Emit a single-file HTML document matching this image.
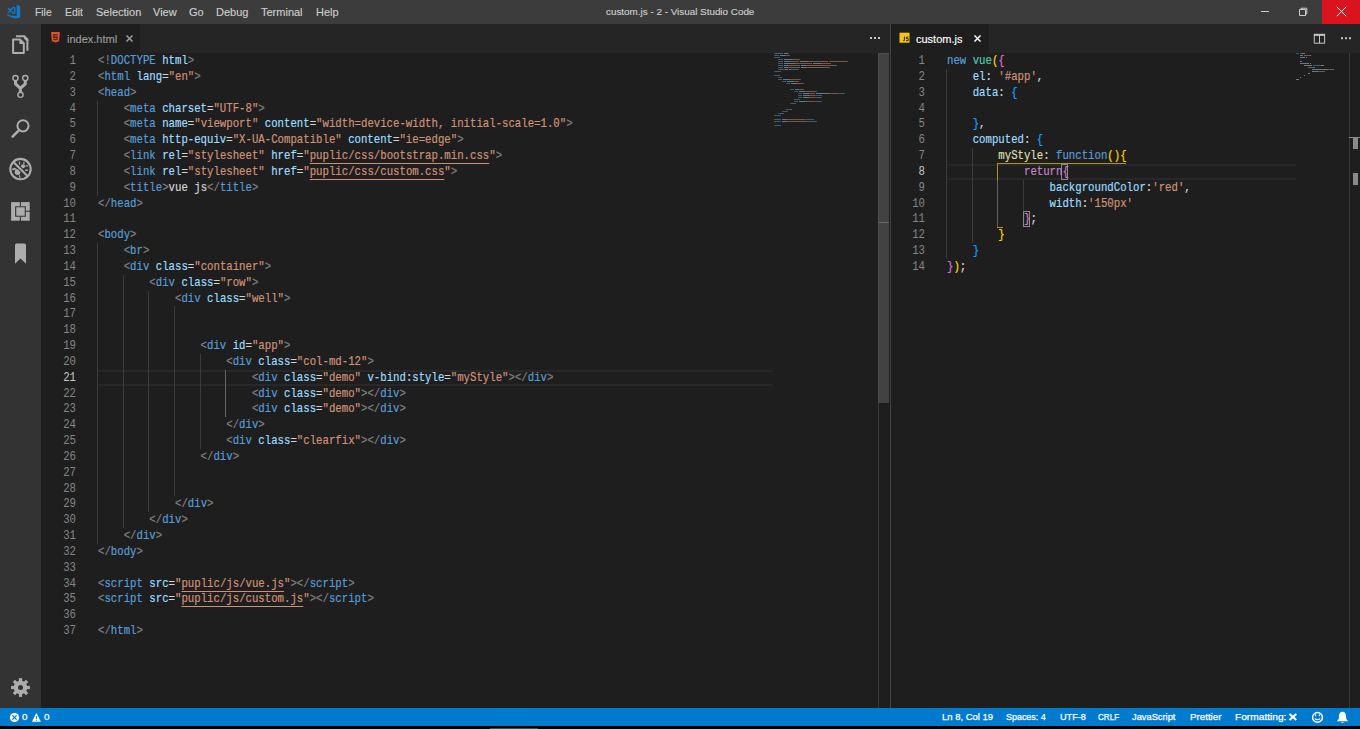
<!DOCTYPE html>
<html><head><meta charset="utf-8"><title>custom.js - 2 - Visual Studio Code</title>
<style>
*{margin:0;padding:0;box-sizing:border-box}
html,body{width:1360px;height:729px;overflow:hidden;background:#000}
body{position:relative;font-family:"Liberation Sans",sans-serif}
.abs{position:absolute}
#title{left:0;top:0;width:1360px;height:24px;background:#3c3c3c}
.menu{position:absolute;top:5px;font-size:11px;color:#cccccc;line-height:14px;white-space:nowrap;transform-origin:0 0;-webkit-text-stroke:0.15px currentColor}
#ttl{position:absolute;top:4.5px;left:605.5px;font-size:9.5px;transform-origin:0 0;-webkit-text-stroke:0.15px currentColor;color:#cccccc;line-height:14px;white-space:nowrap}
#act{left:0;top:24px;width:41px;height:684px;background:#333333}
#edl{left:41px;top:24px;width:849px;height:684px;background:#1e1e1e}
#edr{left:891px;top:24px;width:469px;height:684px;background:#1e1e1e}
#div{left:890px;top:24px;width:1px;height:684px;background:#444444}
.tabs{position:absolute;left:0;top:0;height:29px;background:#252526}
.tab{position:absolute;top:0;height:29px;background:#1e1e1e}
.tabtxt{position:absolute;top:8px;font-size:11px;line-height:14px;white-space:nowrap;-webkit-text-stroke:0.15px currentColor}
#status{left:0;top:708px;width:1360px;height:18px;background:#007acc}
.st{position:absolute;top:3px;font-size:9.9px;line-height:12px;color:#ffffff;white-space:nowrap;transform-origin:0 0;-webkit-text-stroke:0.25px currentColor}
.code{position:absolute;font-family:"Liberation Mono",monospace;font-size:11.9px;line-height:15.8333px;white-space:pre;transform:scaleX(0.89870);transform-origin:0 0;-webkit-text-stroke:0.2px currentColor}
.nums{position:absolute;font-family:"Liberation Mono",monospace;font-size:11.9px;line-height:15.8333px;text-align:right;color:#858585;white-space:pre;transform:scaleX(0.89870);transform-origin:100% 0}
.nums .cur{color:#c6c6c6}
.ln{position:absolute;left:0;right:0;height:16px;line-height:16px}
.g{position:absolute;width:1px;background:#3c3c3c}
.ga{background:#666666}
.curline{position:absolute;height:16px;border-top:2px solid #282828;border-bottom:2px solid #282828}
</style></head>
<body>
<div id="title" class="abs">
  <svg class="abs" style="left:0;top:0" width="26" height="24" viewBox="0 0 26 24">
    <path d="M16.7 4.8 L20.2 6.0 V17.3 L17.6 18.3 L16.7 17.5 Z" fill="#0e7ad3"/>
    <path d="M7.0 14.1 C9 15.2 12 16.3 16.8 16.3 L17.6 18.3 C13 18.3 9.5 16.8 7.0 14.9 Z" fill="#0e7ad3"/>
    <path d="M8.2 8.2 L12.7 12.7 C13.5 13.5 14.8 13.5 14.8 12.1 V8.5 C14.8 7.1 13.5 7.2 12.7 8.0 L8.2 12.5" fill="none" stroke="#0e7ad3" stroke-width="1.4"/>
  </svg>
  <div class="menu" style="left:35px;transform:scaleX(0.94)">File</div>
  <div class="menu" style="left:64.5px;transform:scaleX(0.94)">Edit</div>
  <div class="menu" style="left:96px">Selection</div>
  <div class="menu" style="left:153px">View</div>
  <div class="menu" style="left:189px">Go</div>
  <div class="menu" style="left:216px">Debug</div>
  <div class="menu" style="left:261px">Terminal</div>
  <div class="menu" style="left:316px">Help</div>
  <div id="ttl" style="transform:scaleX(1.038)">custom.js - 2 - Visual Studio Code</div>
  <div class="abs" style="left:1261px;top:11px;width:8px;height:1px;background:#cccccc"></div>
  <svg class="abs" style="left:1296px;top:5px" width="14" height="14" viewBox="1296 5 14 14">
    <path d="M1299.5 9.5 h6 v6 h-6 z M1301 9.3 V8.2 H1306.8 V14 H1305.7" fill="none" stroke="#cccccc" stroke-width="1"/>
  </svg>
  <div class="abs" style="left:1322px;top:0;width:38px;height:24px;background:#d9141f"></div>
  <svg class="abs" style="left:1330px;top:2px" width="20" height="20" viewBox="1330 2 20 20">
    <path d="M1336.8 6.8 L1346.2 16.2 M1346.2 6.8 L1336.8 16.2" stroke="#ffffff" stroke-width="1"/>
  </svg>
</div>

<div id="act" class="abs">
<svg class="abs" style="left:0;top:0" width="41" height="684" viewBox="0 24 41 684">
 <defs><clipPath id="dbc"><circle cx="20.5" cy="169.1" r="9.2"/></clipPath></defs>
 <g fill="none" stroke="#adadad">
  <path d="M13.1 39.6 H20.2 L23.8 43.2 V53.1 H13.1 Z" stroke-width="2" stroke-linejoin="round"/>
  <path d="M16 36.3 H24.4 L27.4 39.3 V50.8" stroke-width="2" stroke-linejoin="miter"/>
  <circle cx="15.5" cy="78.1" r="2.6" stroke-width="1.4"/>
  <circle cx="25.3" cy="78.1" r="2.6" stroke-width="1.4"/>
  <circle cx="20.5" cy="94.8" r="2.6" stroke-width="1.4"/>
  <path d="M15.5 80.6 V83.8 L20.4 88.4 L25.3 83.8 V80.6 M20.4 88 V92.2" stroke-width="3" stroke-linejoin="round"/>
  <circle cx="23" cy="125.8" r="5.6" stroke-width="2"/>
  <path d="M12.6 136.6 L18.6 130.6" stroke-width="2.6" stroke-linecap="round"/>
 </g>
 <g fill="#adadad">
  <path d="M19.4 39 L24.4 44 H19.4 Z"/><path d="M23.8 35.3 L28.4 39.9 V41 L26.4 41 L23.8 38.4 Z"/>
  <circle cx="17.6" cy="172" r="2.9"/>
  <path d="M11.8 168.8 L14.8 167.8 L16.8 168.8 L15.2 169.8 L12.6 170.3 Z"/>
  <path d="M19.6 174.5 L20.6 177.5 L19.6 178.5 L18.8 175.5 Z"/>
  <circle cx="23" cy="166.3" r="2.1"/>
  <path d="M18.9 161.5 h1.2 v3.2 h-1.2 Z M23.3 161.8 h1.2 v2.5 h-1.2 Z M25.6 165.3 h2.6 v1.3 h-2.6 Z M25.2 169.6 h2.6 v1.3 h-2.6 Z"/>
 </g>
 <g clip-path="url(#dbc)">
  <path d="M12.9 161.5 L28.1 176.7" stroke="#333333" stroke-width="4.4"/>
  <path d="M12.9 161.5 L28.1 176.7" stroke="#adadad" stroke-width="2.1"/>
 </g>
 <circle cx="20.5" cy="169.1" r="10.2" stroke-width="2.1" stroke="#adadad" fill="none"/>
 <g fill="#adadad">
  <path d="M11.1 202.1 H29.7 V220.7 H11.1 Z"/>
  <path d="M15 245.2 Q15 243.6 16.6 243.6 H24.4 Q26 243.6 26 245.2 V263.7 L20.5 258.4 L15 263.7 Z"/>
  <path d="M18.9 678.1 h3.2 v18.8 h-3.2 Z" />
  <path d="M18.9 678.1 h3.2 v18.8 h-3.2 Z" transform="rotate(45 20.5 687.5)"/>
  <path d="M18.9 678.1 h3.2 v18.8 h-3.2 Z" transform="rotate(90 20.5 687.5)"/>
  <path d="M18.9 678.1 h3.2 v18.8 h-3.2 Z" transform="rotate(135 20.5 687.5)"/>
  <circle cx="20.5" cy="687.5" r="6.8"/>
 </g>
 <circle cx="20.5" cy="687.5" r="2.5" fill="#333333"/>
 <g stroke="#333333" stroke-width="1.1" fill="none">
  <path d="M20.4 202 V206.2 M20.4 216.8 V221 M25.8 211.3 H30"/>
  <path d="M15.7 206.7 H25.3 V216.3 H15.7 Z"/>
 </g>
</svg>
</div>

<div id="edl" class="abs">
  <div class="tabs" style="width:849px"></div>
  <div class="tab" style="left:0;width:99px"></div>
  <div class="tabtxt" style="left:26px;color:rgba(255,255,255,0.5)">index.html</div>
  <svg class="abs" style="left:0;top:0" width="849" height="29" viewBox="41 24 849 29">
    <path d="M51.1 31.9 H59.9 L59.1 41.2 L55.5 42.5 L51.9 41.2 Z" fill="#e44d26"/>
    <path d="M53.2 34.3 H57.8 V35.6 H54.6 V36.6 H57.8 V39.6 L55.5 40.4 L53.2 39.6 V38.4 H54.5 V38.8 L55.5 39.1 L56.5 38.8 V37.9 H53.2 Z" fill="#1e1e1e" opacity="0.75"/>
    <path d="M126.5 35.5 L132.5 41.5 M132.5 35.5 L126.5 41.5" stroke="#9d9d9d" stroke-width="1.5"/>
    <rect x="870" y="37" width="2" height="2" fill="#c5c5c5"/>
    <rect x="874" y="37" width="2" height="2" fill="#c5c5c5"/>
    <rect x="878" y="37" width="2" height="2" fill="#c5c5c5"/>
  </svg>
</div>
<div id="div" class="abs"></div>
<div id="edr" class="abs">
  <div class="tabs" style="width:469px"></div>
  <div class="tab" style="left:0;width:98px"></div>
  <div class="tabtxt" style="left:25px;color:#ffffff">custom.js</div>
  <svg class="abs" style="left:0;top:0" width="469" height="29" viewBox="891 24 469 29">
    <rect x="899.5" y="32.7" width="10" height="10" fill="#f5c21b"/>
    <path d="M904.4 36.5 V40.6 H903.2 M908.4 37 H906.4 V38.6 H908.2 V40.6 H906" stroke="#1e1e1e" stroke-width="0.9" fill="none"/>
    <path d="M974.5 35.5 L980.5 41.5 M980.5 35.5 L974.5 41.5" stroke="#ffffff" stroke-width="1.5"/>
    <path d="M1314.3 34.8 H1324.6 V43.2 H1314.3 Z M1319.5 35 V43" stroke="#c5c5c5" stroke-width="1" fill="none"/>
    <rect x="1313.8" y="33.8" width="11.3" height="2" fill="#c5c5c5"/>
    <rect x="1341" y="37.2" width="2" height="2" fill="#c5c5c5"/>
    <rect x="1345" y="37.2" width="2" height="2" fill="#c5c5c5"/>
    <rect x="1349" y="37.2" width="2" height="2" fill="#c5c5c5"/>
  </svg>
</div>

<div class="curline" style="left:98px;top:370px;width:675px"></div>
<div class="curline" style="left:947px;top:164px;width:349px"></div>
<div class="abs" style="left:1061px;top:164px;width:7px;height:16px;border:1px solid #888888;background:rgba(0,100,0,0.1)"></div>
<div class="abs" style="left:1023px;top:211px;width:7px;height:16px;border:1px solid #888888;background:rgba(0,100,0,0.1)"></div>

<svg class="abs" style="left:0;top:0" width="1360" height="729" viewBox="0 0 1360 729"><g opacity="0.5"><rect x="774" y="53" width="2" height="1" fill="#808080"/><rect x="776" y="53" width="7" height="1" fill="#569cd6"/><rect x="784" y="53" width="4" height="1" fill="#9cdcfe"/><rect x="788" y="53" width="1" height="1" fill="#808080"/><rect x="774" y="55" width="1" height="1" fill="#808080"/><rect x="775" y="55" width="4" height="1" fill="#569cd6"/><rect x="780" y="55" width="4" height="1" fill="#9cdcfe"/><rect x="784" y="55" width="1" height="1" fill="#d4d4d4"/><rect x="785" y="55" width="4" height="1" fill="#ce9178"/><rect x="789" y="55" width="1" height="1" fill="#808080"/><rect x="774" y="57" width="1" height="1" fill="#808080"/><rect x="775" y="57" width="4" height="1" fill="#569cd6"/><rect x="779" y="57" width="1" height="1" fill="#808080"/><rect x="778" y="59" width="1" height="1" fill="#808080"/><rect x="779" y="59" width="4" height="1" fill="#569cd6"/><rect x="784" y="59" width="7" height="1" fill="#9cdcfe"/><rect x="791" y="59" width="1" height="1" fill="#d4d4d4"/><rect x="792" y="59" width="7" height="1" fill="#ce9178"/><rect x="799" y="59" width="1" height="1" fill="#808080"/><rect x="778" y="61" width="1" height="1" fill="#808080"/><rect x="779" y="61" width="4" height="1" fill="#569cd6"/><rect x="784" y="61" width="4" height="1" fill="#9cdcfe"/><rect x="788" y="61" width="1" height="1" fill="#d4d4d4"/><rect x="789" y="61" width="10" height="1" fill="#ce9178"/><rect x="800" y="61" width="7" height="1" fill="#9cdcfe"/><rect x="807" y="61" width="1" height="1" fill="#d4d4d4"/><rect x="808" y="61" width="20" height="1" fill="#ce9178"/><rect x="829" y="61" width="18" height="1" fill="#ce9178"/><rect x="847" y="61" width="1" height="1" fill="#808080"/><rect x="778" y="63" width="1" height="1" fill="#808080"/><rect x="779" y="63" width="4" height="1" fill="#569cd6"/><rect x="784" y="63" width="10" height="1" fill="#9cdcfe"/><rect x="794" y="63" width="1" height="1" fill="#d4d4d4"/><rect x="795" y="63" width="17" height="1" fill="#ce9178"/><rect x="813" y="63" width="7" height="1" fill="#9cdcfe"/><rect x="820" y="63" width="1" height="1" fill="#d4d4d4"/><rect x="821" y="63" width="9" height="1" fill="#ce9178"/><rect x="830" y="63" width="1" height="1" fill="#808080"/><rect x="778" y="65" width="1" height="1" fill="#808080"/><rect x="779" y="65" width="4" height="1" fill="#569cd6"/><rect x="784" y="65" width="3" height="1" fill="#9cdcfe"/><rect x="787" y="65" width="1" height="1" fill="#d4d4d4"/><rect x="788" y="65" width="12" height="1" fill="#ce9178"/><rect x="801" y="65" width="4" height="1" fill="#9cdcfe"/><rect x="805" y="65" width="1" height="1" fill="#d4d4d4"/><rect x="806" y="65" width="1" height="1" fill="#ce9178"/><rect x="807" y="65" width="28" height="1" fill="#ce9178"/><rect x="835" y="65" width="1" height="1" fill="#ce9178"/><rect x="836" y="65" width="1" height="1" fill="#808080"/><rect x="778" y="67" width="1" height="1" fill="#808080"/><rect x="779" y="67" width="4" height="1" fill="#569cd6"/><rect x="784" y="67" width="3" height="1" fill="#9cdcfe"/><rect x="787" y="67" width="1" height="1" fill="#d4d4d4"/><rect x="788" y="67" width="12" height="1" fill="#ce9178"/><rect x="801" y="67" width="4" height="1" fill="#9cdcfe"/><rect x="805" y="67" width="1" height="1" fill="#d4d4d4"/><rect x="806" y="67" width="1" height="1" fill="#ce9178"/><rect x="807" y="67" width="21" height="1" fill="#ce9178"/><rect x="828" y="67" width="1" height="1" fill="#ce9178"/><rect x="829" y="67" width="1" height="1" fill="#808080"/><rect x="778" y="69" width="1" height="1" fill="#808080"/><rect x="779" y="69" width="5" height="1" fill="#569cd6"/><rect x="784" y="69" width="1" height="1" fill="#808080"/><rect x="785" y="69" width="3" height="1" fill="#d4d4d4"/><rect x="789" y="69" width="2" height="1" fill="#d4d4d4"/><rect x="791" y="69" width="2" height="1" fill="#808080"/><rect x="793" y="69" width="5" height="1" fill="#569cd6"/><rect x="798" y="69" width="1" height="1" fill="#808080"/><rect x="774" y="71" width="2" height="1" fill="#808080"/><rect x="776" y="71" width="4" height="1" fill="#569cd6"/><rect x="780" y="71" width="1" height="1" fill="#808080"/><rect x="774" y="75" width="1" height="1" fill="#808080"/><rect x="775" y="75" width="4" height="1" fill="#569cd6"/><rect x="779" y="75" width="1" height="1" fill="#808080"/><rect x="778" y="77" width="1" height="1" fill="#808080"/><rect x="779" y="77" width="2" height="1" fill="#569cd6"/><rect x="781" y="77" width="1" height="1" fill="#808080"/><rect x="778" y="79" width="1" height="1" fill="#808080"/><rect x="779" y="79" width="3" height="1" fill="#569cd6"/><rect x="783" y="79" width="5" height="1" fill="#9cdcfe"/><rect x="788" y="79" width="1" height="1" fill="#d4d4d4"/><rect x="789" y="79" width="11" height="1" fill="#ce9178"/><rect x="800" y="79" width="1" height="1" fill="#808080"/><rect x="782" y="81" width="1" height="1" fill="#808080"/><rect x="783" y="81" width="3" height="1" fill="#569cd6"/><rect x="787" y="81" width="5" height="1" fill="#9cdcfe"/><rect x="792" y="81" width="1" height="1" fill="#d4d4d4"/><rect x="793" y="81" width="5" height="1" fill="#ce9178"/><rect x="798" y="81" width="1" height="1" fill="#808080"/><rect x="786" y="83" width="1" height="1" fill="#808080"/><rect x="787" y="83" width="3" height="1" fill="#569cd6"/><rect x="791" y="83" width="5" height="1" fill="#9cdcfe"/><rect x="796" y="83" width="1" height="1" fill="#d4d4d4"/><rect x="797" y="83" width="6" height="1" fill="#ce9178"/><rect x="803" y="83" width="1" height="1" fill="#808080"/><rect x="790" y="89" width="1" height="1" fill="#808080"/><rect x="791" y="89" width="3" height="1" fill="#569cd6"/><rect x="795" y="89" width="2" height="1" fill="#9cdcfe"/><rect x="797" y="89" width="1" height="1" fill="#d4d4d4"/><rect x="798" y="89" width="5" height="1" fill="#ce9178"/><rect x="803" y="89" width="1" height="1" fill="#808080"/><rect x="794" y="91" width="1" height="1" fill="#808080"/><rect x="795" y="91" width="3" height="1" fill="#569cd6"/><rect x="799" y="91" width="5" height="1" fill="#9cdcfe"/><rect x="804" y="91" width="1" height="1" fill="#d4d4d4"/><rect x="805" y="91" width="11" height="1" fill="#ce9178"/><rect x="816" y="91" width="1" height="1" fill="#808080"/><rect x="798" y="93" width="1" height="1" fill="#808080"/><rect x="799" y="93" width="3" height="1" fill="#569cd6"/><rect x="803" y="93" width="5" height="1" fill="#9cdcfe"/><rect x="808" y="93" width="1" height="1" fill="#d4d4d4"/><rect x="809" y="93" width="6" height="1" fill="#ce9178"/><rect x="816" y="93" width="12" height="1" fill="#9cdcfe"/><rect x="828" y="93" width="1" height="1" fill="#d4d4d4"/><rect x="829" y="93" width="9" height="1" fill="#ce9178"/><rect x="838" y="93" width="3" height="1" fill="#808080"/><rect x="841" y="93" width="3" height="1" fill="#569cd6"/><rect x="844" y="93" width="1" height="1" fill="#808080"/><rect x="798" y="95" width="1" height="1" fill="#808080"/><rect x="799" y="95" width="3" height="1" fill="#569cd6"/><rect x="803" y="95" width="5" height="1" fill="#9cdcfe"/><rect x="808" y="95" width="1" height="1" fill="#d4d4d4"/><rect x="809" y="95" width="6" height="1" fill="#ce9178"/><rect x="815" y="95" width="3" height="1" fill="#808080"/><rect x="818" y="95" width="3" height="1" fill="#569cd6"/><rect x="821" y="95" width="1" height="1" fill="#808080"/><rect x="798" y="97" width="1" height="1" fill="#808080"/><rect x="799" y="97" width="3" height="1" fill="#569cd6"/><rect x="803" y="97" width="5" height="1" fill="#9cdcfe"/><rect x="808" y="97" width="1" height="1" fill="#d4d4d4"/><rect x="809" y="97" width="6" height="1" fill="#ce9178"/><rect x="815" y="97" width="3" height="1" fill="#808080"/><rect x="818" y="97" width="3" height="1" fill="#569cd6"/><rect x="821" y="97" width="1" height="1" fill="#808080"/><rect x="794" y="99" width="2" height="1" fill="#808080"/><rect x="796" y="99" width="3" height="1" fill="#569cd6"/><rect x="799" y="99" width="1" height="1" fill="#808080"/><rect x="794" y="101" width="1" height="1" fill="#808080"/><rect x="795" y="101" width="3" height="1" fill="#569cd6"/><rect x="799" y="101" width="5" height="1" fill="#9cdcfe"/><rect x="804" y="101" width="1" height="1" fill="#d4d4d4"/><rect x="805" y="101" width="10" height="1" fill="#ce9178"/><rect x="815" y="101" width="3" height="1" fill="#808080"/><rect x="818" y="101" width="3" height="1" fill="#569cd6"/><rect x="821" y="101" width="1" height="1" fill="#808080"/><rect x="790" y="103" width="2" height="1" fill="#808080"/><rect x="792" y="103" width="3" height="1" fill="#569cd6"/><rect x="795" y="103" width="1" height="1" fill="#808080"/><rect x="786" y="109" width="2" height="1" fill="#808080"/><rect x="788" y="109" width="3" height="1" fill="#569cd6"/><rect x="791" y="109" width="1" height="1" fill="#808080"/><rect x="782" y="111" width="2" height="1" fill="#808080"/><rect x="784" y="111" width="3" height="1" fill="#569cd6"/><rect x="787" y="111" width="1" height="1" fill="#808080"/><rect x="778" y="113" width="2" height="1" fill="#808080"/><rect x="780" y="113" width="3" height="1" fill="#569cd6"/><rect x="783" y="113" width="1" height="1" fill="#808080"/><rect x="774" y="115" width="2" height="1" fill="#808080"/><rect x="776" y="115" width="4" height="1" fill="#569cd6"/><rect x="780" y="115" width="1" height="1" fill="#808080"/><rect x="774" y="119" width="1" height="1" fill="#808080"/><rect x="775" y="119" width="6" height="1" fill="#569cd6"/><rect x="782" y="119" width="3" height="1" fill="#9cdcfe"/><rect x="785" y="119" width="1" height="1" fill="#d4d4d4"/><rect x="786" y="119" width="1" height="1" fill="#ce9178"/><rect x="787" y="119" width="16" height="1" fill="#ce9178"/><rect x="803" y="119" width="1" height="1" fill="#ce9178"/><rect x="804" y="119" width="3" height="1" fill="#808080"/><rect x="807" y="119" width="6" height="1" fill="#569cd6"/><rect x="813" y="119" width="1" height="1" fill="#808080"/><rect x="774" y="121" width="1" height="1" fill="#808080"/><rect x="775" y="121" width="6" height="1" fill="#569cd6"/><rect x="782" y="121" width="3" height="1" fill="#9cdcfe"/><rect x="785" y="121" width="1" height="1" fill="#d4d4d4"/><rect x="786" y="121" width="1" height="1" fill="#ce9178"/><rect x="787" y="121" width="19" height="1" fill="#ce9178"/><rect x="806" y="121" width="1" height="1" fill="#ce9178"/><rect x="807" y="121" width="3" height="1" fill="#808080"/><rect x="810" y="121" width="6" height="1" fill="#569cd6"/><rect x="816" y="121" width="1" height="1" fill="#808080"/><rect x="774" y="125" width="2" height="1" fill="#808080"/><rect x="776" y="125" width="4" height="1" fill="#569cd6"/><rect x="780" y="125" width="1" height="1" fill="#808080"/></g><g opacity="0.5"><rect x="1296" y="53" width="3" height="1" fill="#569cd6"/><rect x="1300" y="53" width="3" height="1" fill="#4ec9b0"/><rect x="1303" y="53" width="1" height="1" fill="#d4d4d4"/><rect x="1304" y="53" width="1" height="1" fill="#d4d4d4"/><rect x="1300" y="55" width="2" height="1" fill="#9cdcfe"/><rect x="1302" y="55" width="1" height="1" fill="#d4d4d4"/><rect x="1304" y="55" width="6" height="1" fill="#ce9178"/><rect x="1310" y="55" width="1" height="1" fill="#d4d4d4"/><rect x="1300" y="57" width="4" height="1" fill="#9cdcfe"/><rect x="1304" y="57" width="1" height="1" fill="#d4d4d4"/><rect x="1306" y="57" width="1" height="1" fill="#d4d4d4"/><rect x="1300" y="61" width="1" height="1" fill="#d4d4d4"/><rect x="1301" y="61" width="1" height="1" fill="#d4d4d4"/><rect x="1300" y="63" width="8" height="1" fill="#9cdcfe"/><rect x="1308" y="63" width="1" height="1" fill="#d4d4d4"/><rect x="1310" y="63" width="1" height="1" fill="#d4d4d4"/><rect x="1304" y="65" width="7" height="1" fill="#dcdcaa"/><rect x="1311" y="65" width="1" height="1" fill="#d4d4d4"/><rect x="1313" y="65" width="8" height="1" fill="#569cd6"/><rect x="1321" y="65" width="2" height="1" fill="#d4d4d4"/><rect x="1323" y="65" width="1" height="1" fill="#d4d4d4"/><rect x="1308" y="67" width="6" height="1" fill="#c586c0"/><rect x="1314" y="67" width="1" height="1" fill="#d4d4d4"/><rect x="1312" y="69" width="15" height="1" fill="#9cdcfe"/><rect x="1327" y="69" width="1" height="1" fill="#d4d4d4"/><rect x="1328" y="69" width="5" height="1" fill="#ce9178"/><rect x="1333" y="69" width="1" height="1" fill="#d4d4d4"/><rect x="1312" y="71" width="5" height="1" fill="#9cdcfe"/><rect x="1317" y="71" width="1" height="1" fill="#d4d4d4"/><rect x="1318" y="71" width="7" height="1" fill="#ce9178"/><rect x="1308" y="73" width="1" height="1" fill="#d4d4d4"/><rect x="1309" y="73" width="1" height="1" fill="#d4d4d4"/><rect x="1304" y="75" width="1" height="1" fill="#d4d4d4"/><rect x="1300" y="77" width="1" height="1" fill="#d4d4d4"/><rect x="1296" y="79" width="1" height="1" fill="#d4d4d4"/><rect x="1297" y="79" width="1" height="1" fill="#d4d4d4"/><rect x="1298" y="79" width="1" height="1" fill="#d4d4d4"/></g>
<rect x="878" y="53" width="1" height="655" fill="#3a3a3a"/>
<rect x="878" y="53" width="11" height="350" fill="#424242"/>
<rect x="878" y="53" width="1" height="350" fill="#4e4e4e"/>
<rect x="878" y="53" width="11" height="1" fill="#4e4e4e"/>
<rect x="879" y="222" width="10" height="1" fill="#686868"/>
<rect x="1349" y="53" width="1" height="655" fill="#3a3a3a"/>
<rect x="1349" y="137" width="11" height="1" fill="#8a8a8a"/>
<rect x="1353" y="138" width="5" height="11" fill="#8a8a8a"/>
<rect x="1353" y="173" width="5" height="12" fill="#8a8a8a"/>
</svg>
<div class="g" style="left:97px;top:101px;height:95px"></div>
<div class="g" style="left:97px;top:243px;height:301px"></div>
<div class="g" style="left:123px;top:275px;height:253px"></div>
<div class="g" style="left:148px;top:291px;height:221px"></div>
<div class="g" style="left:174px;top:306px;height:190px"></div>
<div class="g" style="left:200px;top:354px;height:95px"></div>
<div class="g ga" style="left:225px;top:370px;height:47px"></div>
<div class="g" style="left:946px;top:69px;height:190px"></div>
<div class="g" style="left:972px;top:148px;height:95px"></div>
<div class="g ga" style="left:997px;top:164px;height:63px"></div>
<div class="g" style="left:1023px;top:180px;height:31px"></div>
<div class="abs" style="left:997px;top:163px;width:129px;height:1px;background:#b0930e"></div>
<div class="abs" style="left:997px;top:163px;width:1px;height:17px;background:#b0930e"></div>
<div class="abs" style="left:997px;top:227px;width:6px;height:1px;background:#b0930e"></div>

<div class="nums" style="left:50px;top:0;width:26px"><div class="ln" style="top:53px">1</div><div class="ln" style="top:69px">2</div><div class="ln" style="top:85px">3</div><div class="ln" style="top:101px">4</div><div class="ln" style="top:116px">5</div><div class="ln" style="top:132px">6</div><div class="ln" style="top:148px">7</div><div class="ln" style="top:164px">8</div><div class="ln" style="top:180px">9</div><div class="ln" style="top:196px">10</div><div class="ln" style="top:211px">11</div><div class="ln" style="top:227px">12</div><div class="ln" style="top:243px">13</div><div class="ln" style="top:259px">14</div><div class="ln" style="top:275px">15</div><div class="ln" style="top:291px">16</div><div class="ln" style="top:306px">17</div><div class="ln" style="top:322px">18</div><div class="ln" style="top:338px">19</div><div class="ln" style="top:354px">20</div><div class="ln cur" style="top:370px">21</div><div class="ln" style="top:386px">22</div><div class="ln" style="top:401px">23</div><div class="ln" style="top:417px">24</div><div class="ln" style="top:433px">25</div><div class="ln" style="top:449px">26</div><div class="ln" style="top:465px">27</div><div class="ln" style="top:481px">28</div><div class="ln" style="top:496px">29</div><div class="ln" style="top:512px">30</div><div class="ln" style="top:528px">31</div><div class="ln" style="top:544px">32</div><div class="ln" style="top:560px">33</div><div class="ln" style="top:576px">34</div><div class="ln" style="top:591px">35</div><div class="ln" style="top:607px">36</div><div class="ln" style="top:623px">37</div></div>
<div class="code" style="left:97.5px;top:0"><div class="ln" style="top:53px"><span style="color:#808080">&lt;!</span><span style="color:#569cd6">DOCTYPE</span><span style="color:#d4d4d4"> </span><span style="color:#9cdcfe">html</span><span style="color:#808080">&gt;</span></div><div class="ln" style="top:69px"><span style="color:#808080">&lt;</span><span style="color:#569cd6">html</span><span style="color:#d4d4d4"> </span><span style="color:#9cdcfe">lang</span><span style="color:#d4d4d4">=</span><span style="color:#ce9178">"en"</span><span style="color:#808080">&gt;</span></div><div class="ln" style="top:85px"><span style="color:#808080">&lt;</span><span style="color:#569cd6">head</span><span style="color:#808080">&gt;</span></div><div class="ln" style="top:101px"><span style="color:#d4d4d4">    </span><span style="color:#808080">&lt;</span><span style="color:#569cd6">meta</span><span style="color:#d4d4d4"> </span><span style="color:#9cdcfe">charset</span><span style="color:#d4d4d4">=</span><span style="color:#ce9178">"UTF-8"</span><span style="color:#808080">&gt;</span></div><div class="ln" style="top:116px"><span style="color:#d4d4d4">    </span><span style="color:#808080">&lt;</span><span style="color:#569cd6">meta</span><span style="color:#d4d4d4"> </span><span style="color:#9cdcfe">name</span><span style="color:#d4d4d4">=</span><span style="color:#ce9178">"viewport"</span><span style="color:#d4d4d4"> </span><span style="color:#9cdcfe">content</span><span style="color:#d4d4d4">=</span><span style="color:#ce9178">"width=device-width, initial-scale=1.0"</span><span style="color:#808080">&gt;</span></div><div class="ln" style="top:132px"><span style="color:#d4d4d4">    </span><span style="color:#808080">&lt;</span><span style="color:#569cd6">meta</span><span style="color:#d4d4d4"> </span><span style="color:#9cdcfe">http-equiv</span><span style="color:#d4d4d4">=</span><span style="color:#ce9178">"X-UA-Compatible"</span><span style="color:#d4d4d4"> </span><span style="color:#9cdcfe">content</span><span style="color:#d4d4d4">=</span><span style="color:#ce9178">"ie=edge"</span><span style="color:#808080">&gt;</span></div><div class="ln" style="top:148px"><span style="color:#d4d4d4">    </span><span style="color:#808080">&lt;</span><span style="color:#569cd6">link</span><span style="color:#d4d4d4"> </span><span style="color:#9cdcfe">rel</span><span style="color:#d4d4d4">=</span><span style="color:#ce9178">"stylesheet"</span><span style="color:#d4d4d4"> </span><span style="color:#9cdcfe">href</span><span style="color:#d4d4d4">=</span><span style="color:#ce9178">"</span><span style="color:#ce9178;text-decoration:underline;text-underline-offset:3.5px">puplic/css/bootstrap.min.css</span><span style="color:#ce9178">"</span><span style="color:#808080">&gt;</span></div><div class="ln" style="top:164px"><span style="color:#d4d4d4">    </span><span style="color:#808080">&lt;</span><span style="color:#569cd6">link</span><span style="color:#d4d4d4"> </span><span style="color:#9cdcfe">rel</span><span style="color:#d4d4d4">=</span><span style="color:#ce9178">"stylesheet"</span><span style="color:#d4d4d4"> </span><span style="color:#9cdcfe">href</span><span style="color:#d4d4d4">=</span><span style="color:#ce9178">"</span><span style="color:#ce9178;text-decoration:underline;text-underline-offset:3.5px">puplic/css/custom.css</span><span style="color:#ce9178">"</span><span style="color:#808080">&gt;</span></div><div class="ln" style="top:180px"><span style="color:#d4d4d4">    </span><span style="color:#808080">&lt;</span><span style="color:#569cd6">title</span><span style="color:#808080">&gt;</span><span style="color:#d4d4d4">vue js</span><span style="color:#808080">&lt;/</span><span style="color:#569cd6">title</span><span style="color:#808080">&gt;</span></div><div class="ln" style="top:196px"><span style="color:#808080">&lt;/</span><span style="color:#569cd6">head</span><span style="color:#808080">&gt;</span></div><div class="ln" style="top:227px"><span style="color:#808080">&lt;</span><span style="color:#569cd6">body</span><span style="color:#808080">&gt;</span></div><div class="ln" style="top:243px"><span style="color:#d4d4d4">    </span><span style="color:#808080">&lt;</span><span style="color:#569cd6">br</span><span style="color:#808080">&gt;</span></div><div class="ln" style="top:259px"><span style="color:#d4d4d4">    </span><span style="color:#808080">&lt;</span><span style="color:#569cd6">div</span><span style="color:#d4d4d4"> </span><span style="color:#9cdcfe">class</span><span style="color:#d4d4d4">=</span><span style="color:#ce9178">"container"</span><span style="color:#808080">&gt;</span></div><div class="ln" style="top:275px"><span style="color:#d4d4d4">        </span><span style="color:#808080">&lt;</span><span style="color:#569cd6">div</span><span style="color:#d4d4d4"> </span><span style="color:#9cdcfe">class</span><span style="color:#d4d4d4">=</span><span style="color:#ce9178">"row"</span><span style="color:#808080">&gt;</span></div><div class="ln" style="top:291px"><span style="color:#d4d4d4">            </span><span style="color:#808080">&lt;</span><span style="color:#569cd6">div</span><span style="color:#d4d4d4"> </span><span style="color:#9cdcfe">class</span><span style="color:#d4d4d4">=</span><span style="color:#ce9178">"well"</span><span style="color:#808080">&gt;</span></div><div class="ln" style="top:338px"><span style="color:#d4d4d4">                </span><span style="color:#808080">&lt;</span><span style="color:#569cd6">div</span><span style="color:#d4d4d4"> </span><span style="color:#9cdcfe">id</span><span style="color:#d4d4d4">=</span><span style="color:#ce9178">"app"</span><span style="color:#808080">&gt;</span></div><div class="ln" style="top:354px"><span style="color:#d4d4d4">                    </span><span style="color:#808080">&lt;</span><span style="color:#569cd6">div</span><span style="color:#d4d4d4"> </span><span style="color:#9cdcfe">class</span><span style="color:#d4d4d4">=</span><span style="color:#ce9178">"col-md-12"</span><span style="color:#808080">&gt;</span></div><div class="ln" style="top:370px"><span style="color:#d4d4d4">                        </span><span style="color:#808080">&lt;</span><span style="color:#569cd6">div</span><span style="color:#d4d4d4"> </span><span style="color:#9cdcfe">class</span><span style="color:#d4d4d4">=</span><span style="color:#ce9178">"demo"</span><span style="color:#d4d4d4"> </span><span style="color:#9cdcfe">v-bind:style</span><span style="color:#d4d4d4">=</span><span style="color:#ce9178">"myStyle"</span><span style="color:#808080">&gt;&lt;/</span><span style="color:#569cd6">div</span><span style="color:#808080">&gt;</span></div><div class="ln" style="top:386px"><span style="color:#d4d4d4">                        </span><span style="color:#808080">&lt;</span><span style="color:#569cd6">div</span><span style="color:#d4d4d4"> </span><span style="color:#9cdcfe">class</span><span style="color:#d4d4d4">=</span><span style="color:#ce9178">"demo"</span><span style="color:#808080">&gt;&lt;/</span><span style="color:#569cd6">div</span><span style="color:#808080">&gt;</span></div><div class="ln" style="top:401px"><span style="color:#d4d4d4">                        </span><span style="color:#808080">&lt;</span><span style="color:#569cd6">div</span><span style="color:#d4d4d4"> </span><span style="color:#9cdcfe">class</span><span style="color:#d4d4d4">=</span><span style="color:#ce9178">"demo"</span><span style="color:#808080">&gt;&lt;/</span><span style="color:#569cd6">div</span><span style="color:#808080">&gt;</span></div><div class="ln" style="top:417px"><span style="color:#d4d4d4">                    </span><span style="color:#808080">&lt;/</span><span style="color:#569cd6">div</span><span style="color:#808080">&gt;</span></div><div class="ln" style="top:433px"><span style="color:#d4d4d4">                    </span><span style="color:#808080">&lt;</span><span style="color:#569cd6">div</span><span style="color:#d4d4d4"> </span><span style="color:#9cdcfe">class</span><span style="color:#d4d4d4">=</span><span style="color:#ce9178">"clearfix"</span><span style="color:#808080">&gt;&lt;/</span><span style="color:#569cd6">div</span><span style="color:#808080">&gt;</span></div><div class="ln" style="top:449px"><span style="color:#d4d4d4">                </span><span style="color:#808080">&lt;/</span><span style="color:#569cd6">div</span><span style="color:#808080">&gt;</span></div><div class="ln" style="top:496px"><span style="color:#d4d4d4">            </span><span style="color:#808080">&lt;/</span><span style="color:#569cd6">div</span><span style="color:#808080">&gt;</span></div><div class="ln" style="top:512px"><span style="color:#d4d4d4">        </span><span style="color:#808080">&lt;/</span><span style="color:#569cd6">div</span><span style="color:#808080">&gt;</span></div><div class="ln" style="top:528px"><span style="color:#d4d4d4">    </span><span style="color:#808080">&lt;/</span><span style="color:#569cd6">div</span><span style="color:#808080">&gt;</span></div><div class="ln" style="top:544px"><span style="color:#808080">&lt;/</span><span style="color:#569cd6">body</span><span style="color:#808080">&gt;</span></div><div class="ln" style="top:576px"><span style="color:#808080">&lt;</span><span style="color:#569cd6">script</span><span style="color:#d4d4d4"> </span><span style="color:#9cdcfe">src</span><span style="color:#d4d4d4">=</span><span style="color:#ce9178">"</span><span style="color:#ce9178;text-decoration:underline;text-underline-offset:3.5px">puplic/js/vue.js</span><span style="color:#ce9178">"</span><span style="color:#808080">&gt;&lt;/</span><span style="color:#569cd6">script</span><span style="color:#808080">&gt;</span></div><div class="ln" style="top:591px"><span style="color:#808080">&lt;</span><span style="color:#569cd6">script</span><span style="color:#d4d4d4"> </span><span style="color:#9cdcfe">src</span><span style="color:#d4d4d4">=</span><span style="color:#ce9178">"</span><span style="color:#ce9178;text-decoration:underline;text-underline-offset:3.5px">puplic/js/custom.js</span><span style="color:#ce9178">"</span><span style="color:#808080">&gt;&lt;/</span><span style="color:#569cd6">script</span><span style="color:#808080">&gt;</span></div><div class="ln" style="top:623px"><span style="color:#808080">&lt;/</span><span style="color:#569cd6">html</span><span style="color:#808080">&gt;</span></div></div>
<div class="nums" style="left:899px;top:0;width:26px"><div class="ln" style="top:53px">1</div><div class="ln" style="top:69px">2</div><div class="ln" style="top:85px">3</div><div class="ln" style="top:101px">4</div><div class="ln" style="top:116px">5</div><div class="ln" style="top:132px">6</div><div class="ln" style="top:148px">7</div><div class="ln cur" style="top:164px">8</div><div class="ln" style="top:180px">9</div><div class="ln" style="top:196px">10</div><div class="ln" style="top:211px">11</div><div class="ln" style="top:227px">12</div><div class="ln" style="top:243px">13</div><div class="ln" style="top:259px">14</div></div>
<div class="code" style="left:946.5px;top:0"><div class="ln" style="top:53px"><span style="color:#569cd6">new</span><span style="color:#d4d4d4"> </span><span style="color:#4ec9b0">vue</span><span style="color:#ffd700">(</span><span style="color:#da70d6">{</span></div><div class="ln" style="top:69px"><span style="color:#d4d4d4">    </span><span style="color:#9cdcfe">el</span><span style="color:#d4d4d4">: </span><span style="color:#ce9178">'#app'</span><span style="color:#d4d4d4">,</span></div><div class="ln" style="top:85px"><span style="color:#d4d4d4">    </span><span style="color:#9cdcfe">data</span><span style="color:#d4d4d4">: </span><span style="color:#179fff">{</span></div><div class="ln" style="top:116px"><span style="color:#d4d4d4">    </span><span style="color:#179fff">}</span><span style="color:#d4d4d4">,</span></div><div class="ln" style="top:132px"><span style="color:#d4d4d4">    </span><span style="color:#9cdcfe">computed</span><span style="color:#d4d4d4">: </span><span style="color:#179fff">{</span></div><div class="ln" style="top:148px"><span style="color:#d4d4d4">        </span><span style="color:#dcdcaa">myStyle</span><span style="color:#d4d4d4">: </span><span style="color:#569cd6">function</span><span style="color:#ffd700">()</span><span style="color:#ffd700">{</span></div><div class="ln" style="top:164px"><span style="color:#d4d4d4">            </span><span style="color:#c586c0">return</span><span style="color:#da70d6">{</span></div><div class="ln" style="top:180px"><span style="color:#d4d4d4">                </span><span style="color:#9cdcfe">backgroundColor</span><span style="color:#d4d4d4">:</span><span style="color:#ce9178">'red'</span><span style="color:#d4d4d4">,</span></div><div class="ln" style="top:196px"><span style="color:#d4d4d4">                </span><span style="color:#9cdcfe">width</span><span style="color:#d4d4d4">:</span><span style="color:#ce9178">'150px'</span></div><div class="ln" style="top:211px"><span style="color:#d4d4d4">            </span><span style="color:#da70d6">}</span><span style="color:#d4d4d4">;</span></div><div class="ln" style="top:227px"><span style="color:#d4d4d4">        </span><span style="color:#ffd700">}</span></div><div class="ln" style="top:243px"><span style="color:#d4d4d4">    </span><span style="color:#179fff">}</span></div><div class="ln" style="top:259px"><span style="color:#da70d6">}</span><span style="color:#ffd700">)</span><span style="color:#d4d4d4">;</span></div></div>

<div id="status" class="abs">
  <svg class="abs" style="left:0;top:0" width="1360" height="18" viewBox="0 708 1360 18">
    <circle cx="14.5" cy="717.5" r="4.6" fill="#ffffff"/>
    <path d="M12.4 715.4 L16.6 719.6 M16.6 715.4 L12.4 719.6" stroke="#007acc" stroke-width="1.3"/>
    <path d="M36.4 713 L40.9 721.8 H31.9 Z" fill="#ffffff"/>
    <path d="M36.4 716 V719" stroke="#007acc" stroke-width="1"/>
    <rect x="35.9" y="719.8" width="1" height="1" fill="#007acc"/>
    <path d="M1289.5 714 L1296.3 720.1 M1296.3 714 L1289.5 720.1" stroke="#ffffff" stroke-width="2"/>
    <circle cx="1317.5" cy="717.4" r="4.9" fill="none" stroke="#ffffff" stroke-width="1.4"/>
    <rect x="1315" y="714.4" width="1.2" height="1.8" fill="#ffffff"/>
    <rect x="1318.8" y="714.4" width="1.2" height="1.8" fill="#ffffff"/>
    <path d="M1314.8 718.4 Q1317.5 721.2 1320.2 718.4" fill="none" stroke="#ffffff" stroke-width="1.1"/>
    <path d="M1342.5 711.8 C1339.6 711.8 1339 714.5 1339 717 C1339 719.5 1337.6 720.3 1336.8 721.3 H1348.2 C1347.4 720.3 1346 719.5 1346 717 C1346 714.5 1345.4 711.8 1342.5 711.8 Z" fill="#ffffff"/>
    <path d="M1341.2 722 H1343.8 C1343.8 723 1341.2 723 1341.2 722 Z" fill="#ffffff"/>
  </svg>
  <div class="st" style="left:22px">0</div>
  <div class="st" style="left:44px">0</div>
  <div class="st" style="left:942px;transform:scaleX(0.96)">Ln 8, Col 19</div>
  <div class="st" style="left:1006px;transform:scaleX(0.904)">Spaces: 4</div>
  <div class="st" style="left:1059.5px;transform:scaleX(0.927)">UTF-8</div>
  <div class="st" style="left:1098px;transform:scaleX(0.82)">CRLF</div>
  <div class="st" style="left:1132px;transform:scaleX(0.942)">JavaScript</div>
  <div class="st" style="left:1189.5px;transform:scaleX(0.989)">Prettier</div>
  <div class="st" style="left:1235px;transform:scaleX(1.03)">Formatting:</div>
</div>
<div class="abs" style="left:0;top:726px;width:1360px;height:3px;background:#000"></div>
<div class="abs" style="left:490px;top:728px;width:48px;height:1px;background:#46474b"></div>
</body></html>
